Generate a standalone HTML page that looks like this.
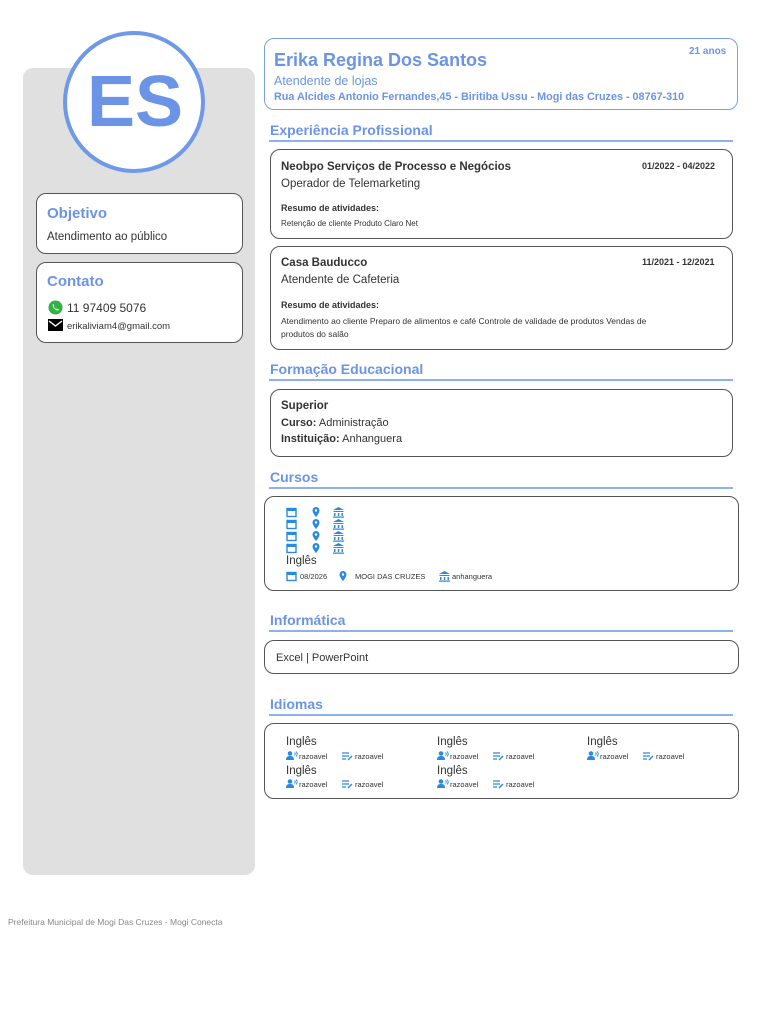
<!DOCTYPE html>
<html><head><meta charset="utf-8"><style>
*{margin:0;padding:0;box-sizing:border-box}
body{width:768px;height:1024px;background:#fff;font-family:"Liberation Sans",sans-serif;color:#333;position:relative;overflow:hidden}
.a{position:absolute;white-space:nowrap}
.blue{color:#6b94e6}
.box{position:absolute;border:1px solid #555;border-radius:10px;background:#fff}
.h{position:absolute;left:270px;font-weight:bold;font-size:14px;color:#6b94e6}
.ln{position:absolute;left:269px;width:464px;height:2px;background:#8fb0ee}
.ic{position:absolute}
</style></head><body>
<div class="a" style="left:23px;top:68px;width:232px;height:807px;background:#e0e0e0;border-radius:10px"></div>
<div class="a" style="left:63px;top:31px;width:142px;height:142px;border-radius:50%;border:4px solid #6f98e8;background:#fff"></div>
<div class="a" style="left:64px;top:60px;width:142px;text-align:center;font-size:72px;font-weight:bold;color:#6b94e6;line-height:84px;letter-spacing:0px">ES</div>

<div class="box" style="left:36px;top:193px;width:207px;height:61px"></div>
<div class="a blue" style="left:47px;top:205px;font-size:15px;font-weight:bold">Objetivo</div>
<div class="a" style="left:47px;top:231px;font-size:11.5px">Atendimento ao público</div>

<div class="box" style="left:36px;top:262px;width:207px;height:81px"></div>
<div class="a blue" style="left:47px;top:273px;font-size:15px;font-weight:bold">Contato</div>
<svg class="ic" style="left:48px;top:300px" width="15" height="15" viewBox="0 0 16 16"><circle cx="8" cy="8" r="7.5" fill="#2fb344"/><path d="M5 4.5c.6-.4 1.1 0 1.4.7l.4 1c.1.4-.4.8-.6 1 .5 1.1 1.4 2 2.5 2.5.3-.3.6-.7 1-.6l1.1.5c.6.3.8.9.3 1.4-1.4 1.3-6.8-2.5-6.1-6.5z" fill="#fff"/></svg>
<div class="a" style="left:67px;top:301px;font-size:12px">11 97409 5076</div>
<svg class="ic" style="left:48px;top:319px" width="15" height="12" viewBox="0 0 15 12"><rect width="15" height="12" fill="#000"/><path d="M1 2l6.5 5L14 2" stroke="#fff" stroke-width="1.4" fill="none"/></svg>
<div class="a" style="left:67px;top:321px;font-size:9.5px">erikaliviam4@gmail.com</div>

<div class="box" style="left:264px;top:38px;width:474px;height:72px;border-color:#7aa0ea"></div>
<div class="a blue" style="left:274px;top:50px;font-size:18px;font-weight:bold">Erika Regina Dos Santos</div>
<div class="a blue" style="left:689px;top:46px;font-size:10px;font-weight:bold">21 anos</div>
<div class="a blue" style="left:274px;top:74px;font-size:12.5px">Atendente de lojas</div>
<div class="a blue" style="left:274px;top:91px;font-size:10.8px;font-weight:bold">Rua Alcides Antonio Fernandes,45 - Biritiba Ussu - Mogi das Cruzes - 08767-310</div>

<div class="h" style="top:122px">Experiência Profissional</div><div class="ln" style="top:140px"></div>
<div class="box" style="left:270px;top:149px;width:463px;height:90px"></div>
<div class="a" style="left:281px;top:161px;font-size:11.5px;font-weight:bold">Neobpo Serviços de Processo e Negócios</div>
<div class="a" style="left:642px;top:161px;font-size:9px;font-weight:bold">01/2022 - 04/2022</div>
<div class="a" style="left:281px;top:178px;font-size:11.5px">Operador de Telemarketing</div>
<div class="a" style="left:281px;top:203px;font-size:9px;font-weight:bold">Resumo de atividades:</div>
<div class="a" style="left:281px;top:219px;font-size:8px">Retenção de cliente Produto Claro Net</div>

<div class="box" style="left:270px;top:246px;width:463px;height:104px"></div>
<div class="a" style="left:281px;top:257px;font-size:11.5px;font-weight:bold">Casa Bauducco</div>
<div class="a" style="left:642px;top:257px;font-size:9px;font-weight:bold">11/2021 - 12/2021</div>
<div class="a" style="left:281px;top:274px;font-size:11.5px">Atendente de Cafeteria</div>
<div class="a" style="left:281px;top:300px;font-size:9px;font-weight:bold">Resumo de atividades:</div>
<div class="a" style="left:281px;top:315px;font-size:8.5px;line-height:13px">Atendimento ao cliente Preparo de alimentos e café Controle de validade de produtos Vendas de<br>produtos do salão</div>

<div class="h" style="top:361px">Formação Educacional</div><div class="ln" style="top:379px"></div>
<div class="box" style="left:270px;top:389px;width:463px;height:68px"></div>
<div class="a" style="left:281px;top:400px;font-size:11.5px;font-weight:bold">Superior</div>
<div class="a" style="left:281px;top:417px;font-size:11px"><b>Curso:</b> Administração</div>
<div class="a" style="left:281px;top:433px;font-size:11px"><b>Instituição:</b> Anhanguera</div>

<div class="h" style="top:469px">Cursos</div><div class="ln" style="top:487px"></div>
<div class="box" style="left:264px;top:496px;width:475px;height:95px"></div>
<svg class="ic" style="left:286px;top:507px" width="200" height="82" viewBox="0 0 200 82">
<defs>
<g id="c"><rect x="1" y="1.5" width="9" height="8" fill="none" stroke="#2a8ae0" stroke-width="1.4"/><rect x="1" y="1.5" width="9" height="2.5" fill="#2a8ae0"/></g>
<g id="p"><path d="M30 0a3.5 3.5 0 0 1 3.5 3.5c0 2.5-3.5 6.5-3.5 6.5s-3.5-4-3.5-6.5A3.5 3.5 0 0 1 30 0z" fill="#2a8ae0"/><circle cx="30" cy="3.5" r="1.2" fill="#fff"/></g>
<g id="b"><path d="M47 3l5.5-3 5.5 3z M47.5 4h10v1h-10z M48 6h1.5v3h-1.5z M51.8 6h1.5v3h-1.5z M55.5 6h1.5v3h-1.5z M47 9.5h11v1.2h-11z" fill="#2a8ae0"/></g>
</defs>
<use href="#c"/><use href="#p"/><use href="#b"/>
<use href="#c" y="12"/><use href="#p" y="12"/><use href="#b" y="12"/>
<use href="#c" y="24"/><use href="#p" y="24"/><use href="#b" y="24"/>
<use href="#c" y="36"/><use href="#p" y="36"/><use href="#b" y="36"/>
<use href="#c" y="64"/><use href="#p" y="64" x="27"/><use href="#b" y="64" x="106"/>
</svg>
<div class="a" style="left:286px;top:555px;font-size:11.5px">Inglês</div>
<div class="a" style="left:300px;top:572px;font-size:7.5px">08/2026</div>
<div class="a" style="left:355px;top:572px;font-size:7.5px">MOGI DAS CRUZES</div>
<div class="a" style="left:452px;top:572px;font-size:7.5px">anhanguera</div>

<div class="h" style="top:612px">Informática</div><div class="ln" style="top:630px"></div>
<div class="box" style="left:264px;top:640px;width:475px;height:34px"></div>
<div class="a" style="left:276px;top:652px;font-size:11px">Excel | PowerPoint</div>

<div class="h" style="top:696px">Idiomas</div><div class="ln" style="top:714px"></div>
<div class="box" style="left:264px;top:723px;width:475px;height:76px"></div>
<svg class="ic" style="left:0;top:0" width="768" height="800" viewBox="0 0 768 800">
<defs>
<g id="sp"><circle cx="4" cy="2.5" r="2.3" fill="#2a8ae0"/><path d="M0 9c0-3 1.5-4 4-4s4 1 4 4z" fill="#2a8ae0"/><path d="M8.5 1.5q1.5 1.5 0 3M10 0.5q2.5 2.5 0 5" stroke="#2a8ae0" fill="none" stroke-width=".9"/></g>
<g id="wr"><path d="M0 2h7M0 5h7M0 8h4" stroke="#2a8ae0" stroke-width="1.2"/><path d="M6 9l4-4" stroke="#2a8ae0" stroke-width="1.3"/></g>
</defs>
<use href="#sp" x="286" y="751"/><use href="#wr" x="342" y="751"/>
<use href="#sp" x="437" y="751"/><use href="#wr" x="493" y="751"/>
<use href="#sp" x="587" y="751"/><use href="#wr" x="643" y="751"/>
<use href="#sp" x="286" y="779"/><use href="#wr" x="342" y="779"/>
<use href="#sp" x="437" y="779"/><use href="#wr" x="493" y="779"/>
</svg>
<div class="a" style="left:286px;top:736px;font-size:11.5px">Inglês</div>
<div class="a" style="left:437px;top:736px;font-size:11.5px">Inglês</div>
<div class="a" style="left:587px;top:736px;font-size:11.5px">Inglês</div>
<div class="a" style="left:286px;top:765px;font-size:11.5px">Inglês</div>
<div class="a" style="left:437px;top:765px;font-size:11.5px">Inglês</div>
<div class="a" style="left:299px;top:752px;font-size:7.5px">razoavel</div><div class="a" style="left:355px;top:752px;font-size:7.5px">razoavel</div>
<div class="a" style="left:450px;top:752px;font-size:7.5px">razoavel</div><div class="a" style="left:506px;top:752px;font-size:7.5px">razoavel</div>
<div class="a" style="left:600px;top:752px;font-size:7.5px">razoavel</div><div class="a" style="left:656px;top:752px;font-size:7.5px">razoavel</div>
<div class="a" style="left:299px;top:780px;font-size:7.5px">razoavel</div><div class="a" style="left:355px;top:780px;font-size:7.5px">razoavel</div>
<div class="a" style="left:450px;top:780px;font-size:7.5px">razoavel</div><div class="a" style="left:506px;top:780px;font-size:7.5px">razoavel</div>

<div class="a" style="left:8px;top:917px;font-size:8.5px;color:#888">Prefeitura Municipal de Mogi Das Cruzes - Mogi Conecta</div>
</body></html>
